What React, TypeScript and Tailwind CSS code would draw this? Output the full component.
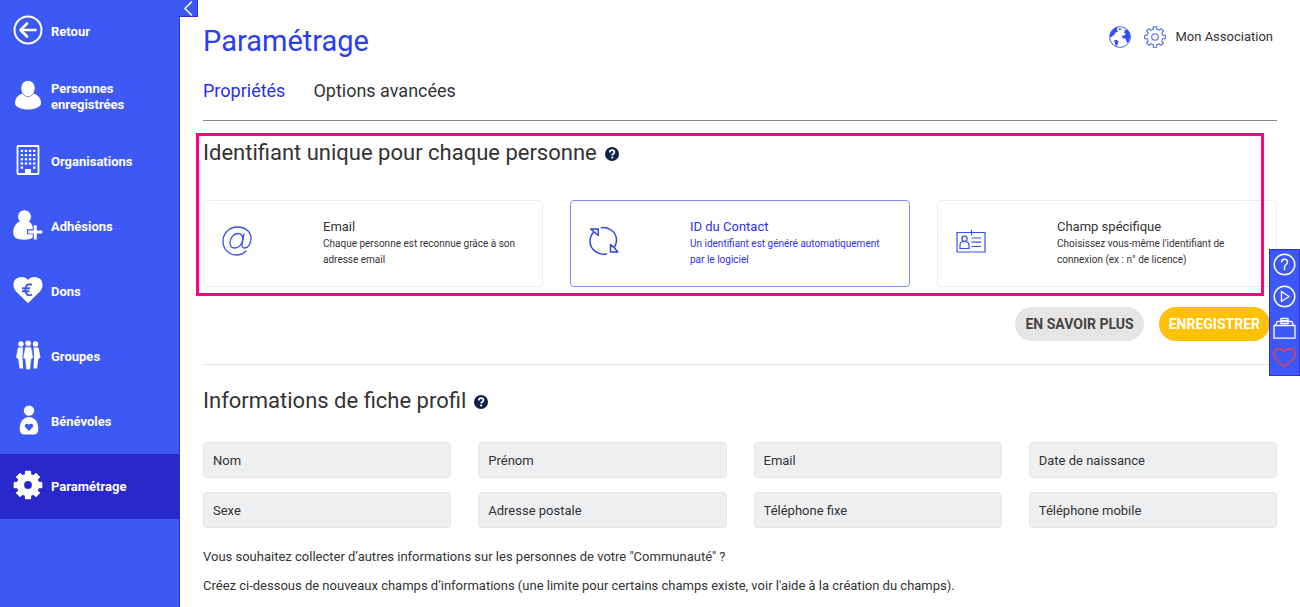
import { ReactNode } from 'react'
import clsx from 'clsx'

function gearPath(c: number, outer: number, root: number) {
  const point = (radius: number, deg: number) => {
    const a = (deg * Math.PI) / 180
    return `${(c + radius * Math.cos(a)).toFixed(2)} ${(c + radius * Math.sin(a)).toFixed(2)}`
  }
  let d = ''
  for (let i = 0; i < 8; i++) {
    const a = i * 45
    d += `${i === 0 ? 'M' : 'L'}${point(root, a - 12)}L${point(outer, a - 9.5)}L${point(outer, a + 9.5)}L${point(root, a + 12)}`
    d += `Q${point(root - 0.6, a + 22.5)} ${point(root, a + 33)}`
  }
  return d + 'Z'
}

function BackIcon() {
  return (
    <svg width="30" height="30" viewBox="0 0 30 30" fill="none" stroke="white" strokeWidth="2" aria-hidden="true">
      <circle cx="15" cy="15" r="13.500" />
      <path d="M22.500 15H8M14 8.500 7.500 15l6.500 6.500" strokeWidth="2.600" strokeLinecap="round" strokeLinejoin="round" />
    </svg>
  )
}

function PersonIcon() {
  return (
    <svg width="30" height="30" viewBox="0 0 30 30" aria-hidden="true">
      <path d="M9.500 13.500C5.500 14.500 2 18 2 23c0 4 6 6.500 13 6.500S28 27 28 23c0-5-3.500-8.500-7.500-9.500Z" fill="white" />
      <path d="M15 .5c4.200 0 7 3.200 7 7.500 0 4.500-3 8.700-7 8.700S8 12.500 8 8C8 3.700 10.800.5 15 .5Z" fill="white" stroke="#3d59f5" strokeWidth=".7" />
    </svg>
  )
}

function BuildingIcon() {
  const windows = [0, 1, 2, 3].flatMap((row) => [0, 1, 2, 3].map((col) => [col, row]))
  return (
    <svg width="30" height="30" viewBox="0 0 30 30" fill="white" aria-hidden="true">
      <rect x="4.500" y="1" width="21" height="28" rx=".5" fill="none" stroke="white" strokeWidth="1.800" />
      {windows.map(([col, row]) => (
        <rect key={`${col}-${row}`} x={7.7 + col * 4.1} y={4.8 + row * 4.2} width="2.400" height="2.200" />
      ))}
      <path d="M7.700 21.500h2.400v2.200H7.700zM20 21.500h2.400v2.200H20zM12 24h6v5h-6z" />
    </svg>
  )
}

function MemberIcon() {
  return (
    <svg width="30" height="30" viewBox="0 0 30 30" fill="white" aria-hidden="true">
      <circle cx="11.500" cy="6.700" r="6.500" />
      <path d="M6.500 11.500C3 13 .3 17 .3 22.500c0 5 3 7.200 10.700 7.200 4 0 7-.6 8.700-2.200v-3.200H14v-5h5.700v-2.500c-.8-2.500-2-4.300-3.700-5.300Z" />
      <path d="M20.800 15.200h2.900v5.200h5.600v3h-5.600v6h-2.900v-6h-5.600v-3h5.600z" />
    </svg>
  )
}

function DonationIcon() {
  return (
    <svg width="30" height="30" viewBox="0 0 30 30" aria-hidden="true">
      <path d="M15 28.300 2.600 16C-1.500 10.500.3 2 8.500 2c3 0 5 1 6.500 3 1.500-2 3.500-3 6.500-3 8.200 0 10 8.500 5.900 14Z" fill="white" />
      <path d="M19 9.800c-4.300-1.800-6.600.7-6.600 4.900s2.400 6.700 6.600 4.900M9 13.300h8M9 16.200h7.500" fill="none" stroke="#3d59f5" strokeWidth="2" />
    </svg>
  )
}

function GroupIcon() {
  return (
    <svg width="30" height="30" viewBox="0 0 30 30" fill="white" aria-hidden="true">
      <circle cx="8" cy="4" r="2.700" />
      <circle cx="22.500" cy="4" r="2.700" />
      <path d="M5 7.500h5L9.500 18l.7 10.500H6.500L5.300 19 3 17.500ZM20.500 7.500h5l2 10-2.200 1.500-1.200 9.500h-3.700l.7-10.500Z" />
      <g stroke="#3d59f5" strokeWidth=".6">
        <circle cx="15.200" cy="3.400" r="3.100" />
        <path d="M12 7h6.400l2 11-1.900 1-1.200 10.700h-4.200L11.900 19l-2-1Z" />
      </g>
    </svg>
  )
}

function VolunteerIcon() {
  return (
    <svg width="30" height="30" viewBox="0 0 30 30" aria-hidden="true">
      <circle cx="16" cy="5.600" r="5.200" fill="white" />
      <path d="M16 12c5.500 0 9.300 5 9.300 11.500 0 4-1.500 6-4.300 6H11c-2.800 0-4.300-2-4.300-6C6.700 17 10.500 12 16 12Z" fill="white" />
      <path d="m16 26-3.700-3.700c-1.800-2.500 1.700-5 3.700-2.500 2-2.500 5.500 0 3.700 2.500Z" fill="#3d59f5" />
    </svg>
  )
}

function SettingsIcon() {
  return (
    <svg width="30" height="30" viewBox="0 0 30 30" fill="white" aria-hidden="true">
      <path d={gearPath(15, 13.6, 10.6)} stroke="white" strokeWidth="1.800" strokeLinejoin="round" />
      <circle cx="15" cy="15" r="3.900" fill="#2828cb" />
    </svg>
  )
}

function GlobeIcon() {
  return (
    <svg width="22" height="22" viewBox="0 0 22 22" aria-hidden="true">
      <circle cx="11" cy="11" r="10.400" fill="none" stroke="#3350f5" strokeWidth=".9" />
      <path
        d="M.9 9.500C1.500 5.500 4.500 2 8.500 1l-.5 3.100 1 1.600-2.600.9L5 9.500l-1.300-.3-.7 2-2-.7ZM9.500 2.500h3l-1 1.500h-1.500ZM16 4l2.500-.6c2 1.900 3 5 2.800 8l-1.900 4.600-1.500 1-1.500-4.500-2.900-.3-.5-2.400 2.500-.5 1.500-1-2-1.500ZM5 14.500l2.500-.8 2.200 2-1.500 3.500-1.400 1-.8-3Z"
        fill="#3350f5"
      />
    </svg>
  )
}

function CogOutlineIcon() {
  return (
    <svg width="22" height="22" viewBox="0 0 22 22" fill="none" stroke="#4f68f7" strokeWidth="1.100" strokeLinejoin="round" aria-hidden="true">
      <path d={gearPath(11, 10.4, 8.2)} />
      <circle cx="11" cy="11" r="3.300" />
    </svg>
  )
}

function AtIcon() {
  return (
    <svg width="30" height="30" viewBox="0 0 30 30" fill="none" stroke="#3350f5" strokeWidth="1.300" strokeLinecap="round" aria-hidden="true">
      <path d="M24 25c-2.500 2.600-5.300 4-9.200 4C6.800 29 1 23.200 1 15.300S7 1 15.500 1C23.500 1 29 6 29 12.500c0 5.500-3 9.500-6.500 9.500-2 0-3-1.200-2.500-3.500L22 8" />
      <path d="M20.800 13.500C21 9.500 19 7.500 16 7.500c-4.500 0-8 4.400-8 9.300 0 3.400 1.800 5.200 4.700 5.200 4 0 7.300-3.500 8.100-8.500Z" />
    </svg>
  )
}

function RefreshIcon() {
  return (
    <svg width="30" height="30" viewBox="0 0 30 30" fill="none" stroke="#2c46ee" strokeWidth="1.500" strokeLinecap="round" strokeLinejoin="round" aria-hidden="true">
      <path d="M12.500 1.700C20 .7 27.500 6 27.500 14c0 2.500-.6 4.700-1.800 6.700M17.500 28C9.500 29.500 1 23.500 1 15.500 1 11.500 2.500 8.500 4.500 6.200" />
      <path d="M1.700 3h7.500v6.500L5.500 6.200ZM21.500 18.500V26h7.300l-3.300-4Z" />
    </svg>
  )
}

function BadgeIcon() {
  return (
    <svg width="30" height="30" viewBox="0 0 30 30" fill="none" stroke="#3350f5" strokeWidth="1.200" aria-hidden="true">
      <path d="M1 6.500h28v19.500H1zM15.500 4v5.500M15.500 12h9.500M15.500 16.200h9.500M15.500 20.500h9.500" />
      <circle cx="8.500" cy="12.700" r="2.600" />
      <path d="M4 22.500v-3.500c0-2.300 2-3.500 4.500-3.500s4.500 1.200 4.500 3.500v3.500Z" />
    </svg>
  )
}

function HelpBadge() {
  return (
    <button type="button" aria-label="Aide" className="mt-0.5">
      <svg width="14" height="14" viewBox="0 0 14 14" fill="none" aria-hidden="true">
        <circle cx="7" cy="7" r="7" fill="#0f2248" />
        <path d="M4.800 5.500C4.800 4 5.800 3.200 7.100 3.200s2.300.8 2.300 2C9.400 6.800 7.200 6.800 7.200 8.400" stroke="white" strokeWidth="1.700" />
        <circle cx="7.200" cy="10.500" r="1.100" fill="white" />
      </svg>
    </button>
  )
}

const menu: { label: string; icon: ReactNode; active?: boolean }[] = [
  { label: 'Personnes enregistrées', icon: <PersonIcon /> },
  { label: 'Organisations', icon: <BuildingIcon /> },
  { label: 'Adhésions', icon: <MemberIcon /> },
  { label: 'Dons', icon: <DonationIcon /> },
  { label: 'Groupes', icon: <GroupIcon /> },
  { label: 'Bénévoles', icon: <VolunteerIcon /> },
  { label: 'Paramétrage', icon: <SettingsIcon />, active: true },
]

const identifiers = [
  { id: 'email', title: 'Email', text: 'Chaque personne est reconnue grâce à son adresse email', icon: <AtIcon /> },
  { id: 'contact', title: 'ID du Contact', text: 'Un identifiant est généré automatiquement par le logiciel', icon: <RefreshIcon /> },
  { id: 'custom', title: 'Champ spécifique', text: "Choisissez vous-même l'identifiant de connexion (ex : n° de licence)", icon: <BadgeIcon /> },
]

const fields = [
  'Nom',
  'Prénom',
  'Email',
  'Date de naissance',
  'Sexe',
  'Adresse postale',
  'Téléphone fixe',
  'Téléphone mobile',
]

function Sidebar() {
  return (
    <nav className="relative w-[180px] shrink-0 border-r border-[#2c2ee0] bg-[#3d59f5] text-[13px] leading-4 font-bold text-white">
      <a href="#retour" className="flex h-16 items-center gap-2 pr-10 pb-1 pl-[13px]">
        <BackIcon />
        <span className="pt-1">Retour</span>
      </a>
      {menu.map((item) => (
        <a
          key={item.label}
          href="#menu"
          aria-current={item.active ? 'page' : undefined}
          className={clsx('flex h-[65px] items-center gap-2 pr-10 pb-1 pl-[13px]', item.active && 'bg-[#2828cb]')}
        >
          <span className="shrink-0">{item.icon}</span>
          <span className="pt-1">{item.label}</span>
        </a>
      ))}
      <button
        type="button"
        aria-label="Réduire le menu"
        className="absolute top-0 left-full flex h-[17px] w-[19px] items-center justify-center border-r border-b border-[#2c2ee0] bg-[#3d59f5]"
      >
        <svg width="9" height="15" viewBox="0 0 9 15" fill="none" stroke="white" strokeWidth="1.500" aria-hidden="true">
          <path d="M8 .5 1 7.500l7 7" />
        </svg>
      </button>
    </nav>
  )
}

function Toolbar() {
  return (
    <aside className="fixed top-[249px] right-0 flex w-[31px] flex-col items-center gap-[9px] border border-[#2c2ee0] bg-[#3d59f5] pt-[3px] pb-[7px]">
      <button type="button" aria-label="Aide">
        <svg width="23" height="23" viewBox="0 0 23 23" fill="none" stroke="white" strokeWidth="1.400" aria-hidden="true">
          <circle cx="11.500" cy="11.500" r="10.300" />
          <path d="M8.500 9.500c0-2 1.200-3.200 3-3.200s3 1.100 3 2.900c0 2.300-3 2.300-3 4.800v3.300" />
        </svg>
      </button>
      <button type="button" aria-label="Vidéo">
        <svg width="23" height="23" viewBox="0 0 23 23" fill="none" stroke="white" strokeWidth="1.400" aria-hidden="true">
          <circle cx="11.500" cy="11.500" r="10.300" />
          <path d="M8.500 6.500v10l7.500-5Z" strokeLinejoin="round" />
        </svg>
      </button>
      <button type="button" aria-label="Services">
        <svg width="23" height="22" viewBox="0 0 23 22" fill="none" stroke="white" strokeWidth="1.300" strokeLinejoin="round" aria-hidden="true">
          <path d="M1 8.500h21v12.700H1zM2.500 8.500l1.800-4.200h14.400l1.800 4.200M8 6.500V1.300h7v5.200zM8 3.500h7" />
        </svg>
      </button>
      <button type="button" aria-label="Favoris">
        <svg width="23" height="20" viewBox="0 0 23 20" fill="none" stroke="#ea3b5c" strokeWidth="1.400" strokeLinejoin="round" aria-hidden="true">
          <path d="M11.500 19 2.300 10.500C-1 6 1.500.8 6.300.8c2.500 0 4.200 1.400 5.200 3.200 1-1.800 2.700-3.200 5.200-3.200 4.800 0 7.300 5.200 4 9.700Z" />
        </svg>
      </button>
    </aside>
  )
}

export default function App() {
  return (
    <div className="flex min-h-screen bg-white font-['Roboto',sans-serif] text-[13px] text-[#333]">
      <Sidebar />

      <main className="min-w-0 flex-1 px-[23px] pt-[21px] pb-3">
        <header className="flex items-start justify-between">
          <h1 className="text-[29px] leading-10 text-[#2b3cf2]">Paramétrage</h1>
          <div className="flex h-8 items-center gap-[9px] pr-1">
            <div className="flex gap-[13px]">
              <button type="button" aria-label="Langue">
                <GlobeIcon />
              </button>
              <button type="button" aria-label="Réglages">
                <CogOutlineIcon />
              </button>
            </div>
            <a href="#association">Mon Association</a>
          </div>
        </header>

        <nav className="mt-[18px] flex gap-7 border-b border-[#888] pb-[17px] text-lg leading-6">
          <a href="#proprietes" aria-current="page" className="text-[#2b2ff0]">
            Propriétés
          </a>
          <a href="#options">Options avancées</a>
        </nav>

        <section className="relative mt-4">
          <div className="flex items-center gap-2">
            <h2 className="text-[22px] leading-8">Identifiant unique pour chaque personne</h2>
            <HelpBadge />
          </div>
          <div className="mt-[31px] grid grid-cols-3 gap-[27px]">
            {identifiers.map((item) => (
              <label
                key={item.id}
                className="flex min-h-[87px] items-center rounded-[4px] border border-[#ececec] px-[18px] pb-0.5 has-checked:border-[#7f8cf8] has-checked:text-[#2b2ff0]"
              >
                <input type="radio" name="identifier" value={item.id} defaultChecked={item.id === 'contact'} className="sr-only" />
                <span className="w-[101px] shrink-0 pb-1">{item.icon}</span>
                <span>
                  <span className="block leading-[18px]">{item.title}</span>
                  <span className="block text-[10px] leading-4">{item.text}</span>
                </span>
              </label>
            ))}
          </div>
          <div className="pointer-events-none absolute -top-1 right-[13px] -bottom-[9px] -left-[7px] border-3 border-[#ff0080]" />
        </section>

        <div className="mt-5 flex justify-end gap-[15px] pr-[7px] text-sm font-bold">
          <button type="button" className="h-[34px] rounded-full bg-[#e6e5e4] px-[10px] text-[#444]">
            EN SAVOIR PLUS
          </button>
          <button type="button" className="h-[34px] rounded-full bg-[#fec107] px-[10px] text-white">
            ENREGISTRER
          </button>
        </div>

        <section className="mt-[23px] border-t border-[#e6e6e6] pt-5">
          <div className="flex items-center gap-2">
            <h2 className="text-[22px] leading-8">Informations de fiche profil</h2>
            <HelpBadge />
          </div>
          <div className="mt-[25px] grid grid-cols-4 gap-x-[27px] gap-y-[14px]">
            {fields.map((field) => (
              <input
                key={field}
                type="text"
                readOnly
                aria-label={field}
                value={field}
                className="h-9 w-full min-w-0 rounded-[4px] border border-[#e5e5e5] bg-[#eeeff0] px-[9px]"
              />
            ))}
          </div>
          <p className="mt-[19px] leading-5">
            Vous souhaitez collecter d’autres informations sur les personnes de votre "Communauté" ?
          </p>
          <p className="mt-[9px] leading-5">
            Créez ci-dessous de nouveaux champs d’informations (une limite pour certains champs existe, voir l'aide à la création du champs).
          </p>
        </section>
      </main>

      <Toolbar />
    </div>
  )
}
